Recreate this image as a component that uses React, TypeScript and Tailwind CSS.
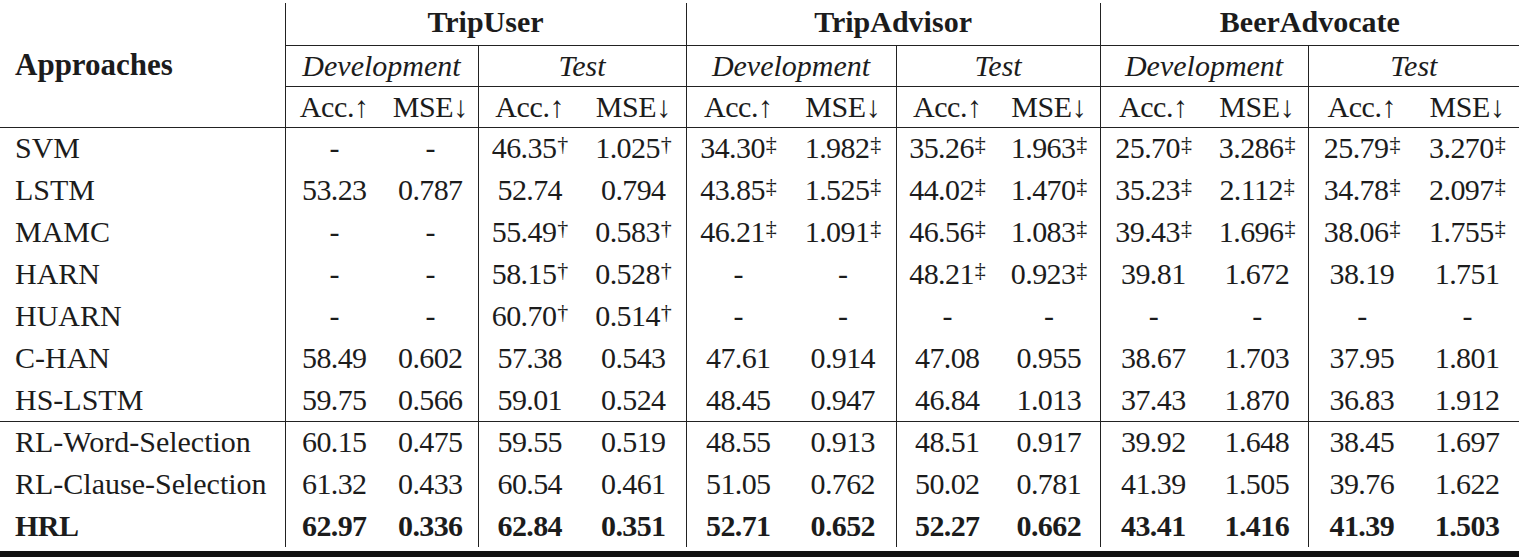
import React from "react";

type Cell = { v: string; s?: string };
type Row = { name: string; cells: Cell[]; bold?: boolean };

const d = (v: string): Cell => ({ v, s: "†" });
const dd = (v: string): Cell => ({ v, s: "‡" });
const p = (v: string): Cell => ({ v });

const group1: Row[] = [
  { name: "SVM", cells: [p("-"), p("-"), d("46.35"), d("1.025"), dd("34.30"), dd("1.982"), dd("35.26"), dd("1.963"), dd("25.70"), dd("3.286"), dd("25.79"), dd("3.270")] },
  { name: "LSTM", cells: [p("53.23"), p("0.787"), p("52.74"), p("0.794"), dd("43.85"), dd("1.525"), dd("44.02"), dd("1.470"), dd("35.23"), dd("2.112"), dd("34.78"), dd("2.097")] },
  { name: "MAMC", cells: [p("-"), p("-"), d("55.49"), d("0.583"), dd("46.21"), dd("1.091"), dd("46.56"), dd("1.083"), dd("39.43"), dd("1.696"), dd("38.06"), dd("1.755")] },
  { name: "HARN", cells: [p("-"), p("-"), d("58.15"), d("0.528"), p("-"), p("-"), dd("48.21"), dd("0.923"), p("39.81"), p("1.672"), p("38.19"), p("1.751")] },
  { name: "HUARN", cells: [p("-"), p("-"), d("60.70"), d("0.514"), p("-"), p("-"), p("-"), p("-"), p("-"), p("-"), p("-"), p("-")] },
  { name: "C-HAN", cells: [p("58.49"), p("0.602"), p("57.38"), p("0.543"), p("47.61"), p("0.914"), p("47.08"), p("0.955"), p("38.67"), p("1.703"), p("37.95"), p("1.801")] },
  { name: "HS-LSTM", cells: [p("59.75"), p("0.566"), p("59.01"), p("0.524"), p("48.45"), p("0.947"), p("46.84"), p("1.013"), p("37.43"), p("1.870"), p("36.83"), p("1.912")] },
];

const group2: Row[] = [
  { name: "RL-Word-Selection", cells: ["60.15", "0.475", "59.55", "0.519", "48.55", "0.913", "48.51", "0.917", "39.92", "1.648", "38.45", "1.697"].map(p) },
  { name: "RL-Clause-Selection", cells: ["61.32", "0.433", "60.54", "0.461", "51.05", "0.762", "50.02", "0.781", "41.39", "1.505", "39.76", "1.622"].map(p) },
  { name: "HRL", bold: true, cells: ["62.97", "0.336", "62.84", "0.351", "52.71", "0.652", "52.27", "0.662", "43.41", "1.416", "41.39", "1.503"].map(p) },
];

const widths = [285, 98, 95, 103, 105, 104, 106, 102, 102, 106, 102, 107, 104];

const B = "border-[#222]";

function DataRow({ row, first }: { row: Row; first?: boolean }) {
  return (
    <tr className={`h-[42px] ${first ? `border-t ${B}` : ""}`}>
      <td className={`pl-[15px] text-left border-r ${B} whitespace-nowrap ${row.bold ? "font-bold tracking-[-0.5px]" : ""}`}>{row.name}</td>
      {row.cells.map((c, i) => (
        <td
          key={i}
          className={`text-center whitespace-nowrap tracking-[-0.6px] ${i % 2 === 1 && i < 11 ? `border-r ${B}` : ""} ${row.bold ? "font-bold" : ""}`}
        >
          {c.v}
          {c.s ? <span className="text-[22px] align-top relative top-[0px] ml-[1px]">{c.s}</span> : null}
        </td>
      ))}
    </tr>
  );
}

export default function App() {
  const datasets = ["TripUser", "TripAdvisor", "BeerAdvocate"];
  return (
    <div className="w-[1519px] h-[557px] bg-white text-[#1c1c1c] overflow-hidden font-['Liberation_Serif','Times_New_Roman',serif]">
      <table className="table-fixed border-collapse text-[30px] leading-none w-[1519px] mt-[3px]">
        <colgroup>
          {widths.map((w, i) => (
            <col key={i} style={{ width: w }} />
          ))}
        </colgroup>
        <thead>
          <tr className="h-[42px]">
            <th rowSpan={3} className={`pl-[15px] text-left font-bold text-[31px] border-r ${B}`}>
              Approaches
            </th>
            {datasets.map((ds, i) => (
              <th
                key={ds}
                colSpan={4}
                className={`font-bold text-center pb-[3px] border-b ${B} ${i < 2 ? `border-r ${B}` : ""}`}
              >
                {ds}
              </th>
            ))}
          </tr>
          <tr className="h-[41px]">
            {[0, 1, 2, 3, 4, 5].map((i) => (
              <th
                key={i}
                colSpan={2}
                className={`font-normal italic text-center border-b ${B} ${i < 5 ? `border-r ${B}` : ""}`}
              >
                {i % 2 === 0 ? "Development" : "Test"}
              </th>
            ))}
          </tr>
          <tr className="h-[41px]">
            {[0, 1, 2, 3, 4, 5].map((i) => (
              <React.Fragment key={i}>
                <th className="font-normal text-center whitespace-nowrap tracking-[-0.4px]">Acc.↑</th>
                <th className={`font-normal text-center whitespace-nowrap tracking-[-0.4px] ${i < 5 ? `border-r ${B}` : ""}`}>MSE↓</th>
              </React.Fragment>
            ))}
          </tr>
        </thead>
        <tbody>
          {group1.map((r, i) => (
            <DataRow key={r.name} row={r} first={i === 0} />
          ))}
          {group2.map((r, i) => (
            <DataRow key={r.name} row={r} first={i === 0} />
          ))}
        </tbody>
      </table>
      <div className="mt-[4px] h-[6px] bg-[#111]" />
    </div>
  );
}
